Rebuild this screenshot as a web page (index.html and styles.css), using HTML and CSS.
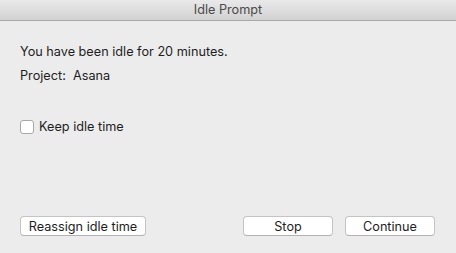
FILE: index.html
```html
<!DOCTYPE html>
<html>
<head>
<meta charset="utf-8">
<link rel="stylesheet" href="styles.css">
</head>
<body>
<div class="window">
  <div class="titlebar">Idle Prompt</div>
  <div class="content">
    <p class="msg">You have been idle for 20 minutes.</p>
    <p class="project">Project:&nbsp;&nbsp;Asana</p>
    <label class="check"><span class="box"></span>Keep idle time</label>
    <div class="spacer"></div>
    <div class="buttons">
      <button class="btn reassign">Reassign idle time</button>
      <div class="right">
        <button class="btn wide">Stop</button>
        <button class="btn wide">Continue</button>
      </div>
    </div>
  </div>
</div>
</body>
</html>
```
FILE: styles.css
```css
html, body {
  margin: 0;
  padding: 0;
  background: #ececec;
}
.window {
  width: 456px;
  height: 253px;
  display: flex;
  flex-direction: column;
  font-family: Inter, "Liberation Sans", sans-serif;
  font-size: 12.7px;
  color: #1e1e1e;
  background: #ececec;
}
.titlebar {
  height: 20px;
  line-height: 20px;
  text-align: center;
  color: #4a4a4a;
  background: linear-gradient(#e9e9e9, #d2d2d2);
  border-bottom: 1px solid #a9a9a9;
}
.content {
  flex: 1;
  display: flex;
  flex-direction: column;
  padding: 0 21px 17px 20px;
}
.msg {
  margin: 23px 0 0 0;
  line-height: 16px;
}
.project {
  margin: 8px 0 0 0;
  line-height: 16px;
}
.check {
  display: flex;
  align-items: center;
  gap: 5px;
  margin-top: 35px;
  line-height: 16px;
}
.box {
  width: 12px;
  height: 12px;
  border: 1px solid #a8a8a8;
  border-radius: 3px;
  background: #fff;
}
.spacer { flex: 1; }
.buttons {
  display: flex;
  justify-content: space-between;
}
.right {
  display: flex;
  gap: 12px;
}
.btn {
  height: 20px;
  padding: 0;
  font: inherit;
  color: #1e1e1e;
  background: #fff;
  border: 1px solid #c4c4c4;
  border-bottom-color: #b2b2b2;
  border-radius: 4px;
}
.reassign { width: 126px; }
.wide { width: 90px; }
```
